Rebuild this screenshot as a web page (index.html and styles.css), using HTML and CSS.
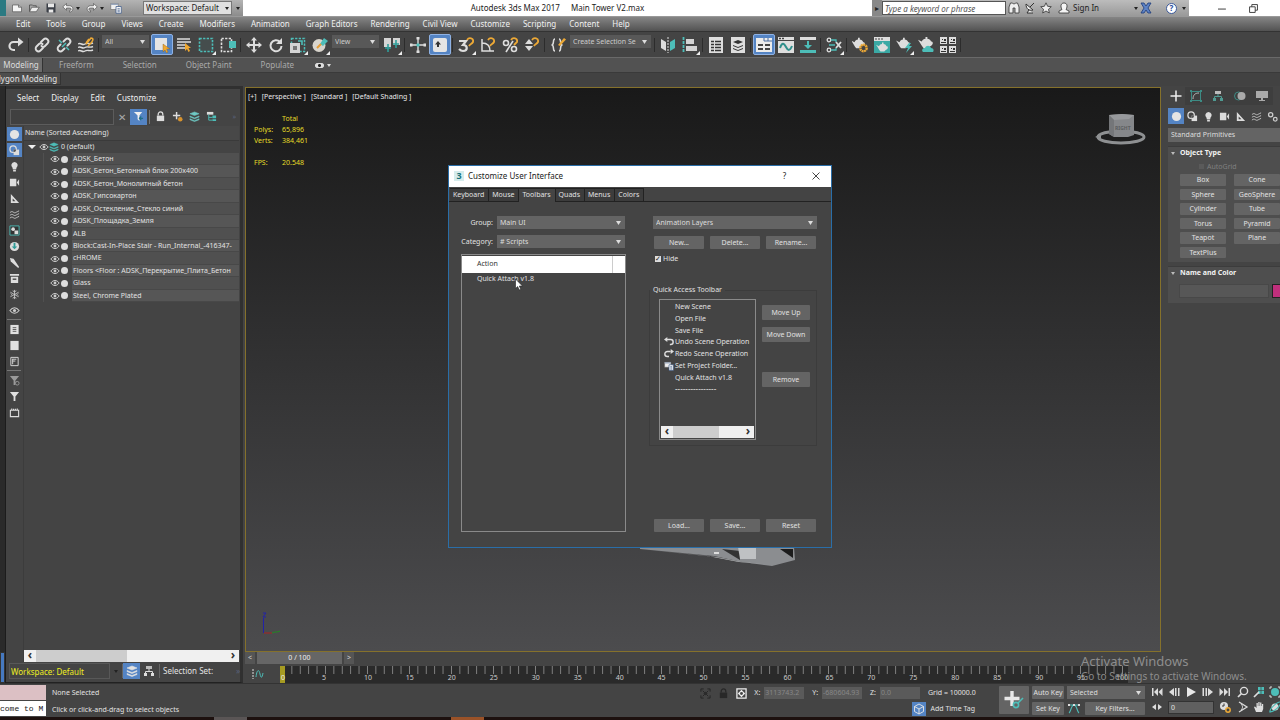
FILE: index.html
```html
<!DOCTYPE html>
<html lang="en">
<head>
<meta charset="utf-8">
<title>Autodesk 3ds Max 2017 - Main Tower V2.max</title>
<link rel="stylesheet" href="styles.css">
</head>
<body>
<svg class="sprite" aria-hidden="true">
  <defs>
    <symbol id="new" viewBox="0 0 16 16"><path d="M2 4h8l4 3v6H2z" fill="#f4f4f4" stroke="#444" stroke-width=".8"/><path d="M10 4v3h4" fill="#bbb" stroke="#444" stroke-width=".8"/></symbol>
    <symbol id="open" viewBox="0 0 16 16"><path d="M2 13V4h4l1 1h4v2" fill="#aaa" stroke="#444"/><path d="M2 13l3-6h10l-4 6z" fill="#eee" stroke="#555"/></symbol>
    <symbol id="save" viewBox="0 0 16 16"><path d="M2 2h12v12H3l-1-1z" fill="#3c4048"/><path d="M4 2h8v5H4zM5 10h6v4H5z" fill="#e8e8e8"/></symbol>
    <symbol id="undo" viewBox="0 0 16 16"><path d="M6 2L1 6.500l5 4.500V8h4c3 0 3 3 0 3.500v2c6-.5 6-8.500 0-8.500H6z" fill="#f4f4f4" stroke="#444" stroke-width=".8"/></symbol>
    <symbol id="redo" viewBox="0 0 16 16"><path d="M10 2l5 4.500-5 4.500V8H6c-3 0-3 3 0 3.500v2C0 13 0 5 6 5h4z" fill="#f4f4f4" stroke="#444" stroke-width=".8"/></symbol>
    <symbol id="project" viewBox="0 0 16 16"><path d="M1 2h10v8H1z" fill="#f0f0f0" stroke="#666" stroke-width=".8"/><path d="M1 2h10v2H1z" fill="#99a7bd"/><path d="M8 6h7v9H8z" fill="#f7f7f7" stroke="#3c5a8a"/><path d="M10 9h3M10 11h3M10 13h3" stroke="#3c5a8a"/></symbol>

    <symbol id="redobig" viewBox="0 0 16 16"><path d="M11 5H5.500a4 4 0 0 0 0 8H7" fill="none" stroke="#ddd" stroke-width="2.200"/><path d="M10 .5l5.500 4.500L10 9.500z" fill="#ddd"/></symbol>
    <symbol id="link" viewBox="0 0 16 16"><g fill="none" stroke="#ddd" stroke-width="1.900" stroke-linecap="round"><path d="M7 5l2.500-2.500a2.500 2.500 0 0 1 4 4L11 9a2.500 2.500 0 0 1-3.500 0"/><path d="M9 11l-2.500 2.500a2.500 2.500 0 0 1-4-4L5 7a2.500 2.500 0 0 1 3.500 0"/></g></symbol>
    <symbol id="unlink" viewBox="0 0 16 16"><g fill="none" stroke="#ddd" stroke-width="1.900" stroke-linecap="round"><path d="M7.500 4.500l2-2a2.500 2.500 0 0 1 4 4l-2 2"/><path d="M8.500 11.500l-2 2a2.500 2.500 0 0 1-4-4l2-2"/></g><path d="M3 3l3 3M10 10l3 3M10 6L6 10" stroke="#4dbdb8" stroke-width="1.500"/></symbol>
    <symbol id="bind" viewBox="0 0 16 16"><g fill="none" stroke="#ddd" stroke-width="1.400"><path d="M0 7c3-2 4 2 7 0s4 1 8-1M0 10.500c3-2 4 2 7 0s4 1 8-1M0 14c3-2 4 2 7 0s4 1 8-1"/></g><path d="M8 7l5-6c3 0 2 3 0 5l-3 3M8 6l3-4" fill="none" stroke="#eda936" stroke-width="1.600"/></symbol>
    <symbol id="select" viewBox="0 0 16 16"><path d="M1 1h12v12H1z" fill="#e4e4e4"/><path d="M9 7v8l2-2 1.500 3 1.500-1-1.500-3H16z" fill="#f0a830" stroke="#7d5a20" stroke-width=".4"/></symbol>
    <symbol id="byname" viewBox="0 0 16 16"><path d="M1 2h13M1 5h14M1 8h9M1 11h8" stroke="#ddd" stroke-width="1.700"/><path d="M9 6v8l2-2 1.500 3 1.500-1-1.500-3H15z" fill="#f0a830"/></symbol>
    <symbol id="rect" viewBox="0 0 16 16"><path d="M1.500 1.500h13v13h-13z" fill="#454d4d" stroke="#4dbdb8" stroke-width="1.600" stroke-dasharray="2.300 1.300"/></symbol>
    <symbol id="window" viewBox="0 0 16 16"><path d="M1.500 1.500h10v13h-10z" fill="none" stroke="#ddd" stroke-width="1.600" stroke-dasharray="2.300 1.300"/><path d="M9 4h7v7H9z" fill="#4dbdb8"/></symbol>
    <symbol id="move" viewBox="0 0 16 16"><path d="M8 0l3 3.500H9V7h3.500V5L16 8l-3.500 3V9H9v3.500h2L8 16l-3-3.500h2V9H3.500v2L0 8l3.500-3v2H7V3.500H5z" fill="#ddd"/></symbol>
    <symbol id="rotate" viewBox="0 0 16 16"><path d="M12 5A5.500 5.500 0 1 0 13.500 9" fill="none" stroke="#ddd" stroke-width="2"/><path d="M14 1v6H8z" fill="#ddd"/></symbol>
    <symbol id="scale" viewBox="0 0 16 16"><path d="M1.500 1.500h13v13h-13z" fill="none" stroke="#4dbdb8" stroke-width="1.500" stroke-dasharray="2.300 1.300"/><path d="M0 6h10v10H0z" fill="#d4d4d4"/><path d="M3 9h4v4H3z" fill="#777"/><path d="M8 4h4v4" fill="none" stroke="#4dbdb8" stroke-width="1.600"/></symbol>
    <symbol id="place" viewBox="0 0 16 16"><circle cx="7" cy="8.500" r="6.500" fill="#d8d4cc"/><path d="M8 7l4-6 4 3-5 5z" fill="#4dbdb8"/><path d="M5 11l4-4" stroke="#e39b35" stroke-width="2"/></symbol>
    <symbol id="pivot" viewBox="0 0 16 16"><path d="M0 1h7v9H0zM9 1h7v7H9z" fill="#d4d4d4"/><path d="M4 7v8M1 11h6M12 3v8M9 7h6" stroke="#2f9f9b" stroke-width="1.600"/></symbol>
    <symbol id="manip" viewBox="0 0 16 16"><path d="M8 1v14M1 8h14" stroke="#ddd" stroke-width="1.400"/><path d="M6.500 0h3v2.500h-3zM6.500 13.500h3V16h-3zM0 6.500h2.500v3H0zM13.500 6.500H16v3h-2.500z" fill="#ddd"/><circle cx="8" cy="8" r="1.700" fill="#4dbdb8"/></symbol>
    <symbol id="kbd" viewBox="0 0 16 16"><rect x="1" y="1" width="14" height="14" rx="2" fill="#e4e4e4"/><path d="M6 4l3 3.500H7V10H5V7.500H3z" fill="#333"/></symbol>
    <symbol id="snap" viewBox="0 0 16 16"><path d="M1 4h7L5 8c5 0 5 6 0 6-2 0-3-1-4-2" fill="none" stroke="#ddd" stroke-width="2.200"/><path d="M9 3c2-3 7-2 6 2-1 2-3 2-4 4" fill="none" stroke="#eda936" stroke-width="1.800"/></symbol>
    <symbol id="angle" viewBox="0 0 16 16"><path d="M2 2v12h12M2 6c6 0 8 4 8 8" fill="none" stroke="#ddd" stroke-width="1.500"/><path d="M8 3c2-3 7-2 6 2-1 2-3 2-4 4" fill="none" stroke="#eda936" stroke-width="1.800"/></symbol>
    <symbol id="percent" viewBox="0 0 16 16"><circle cx="4" cy="6" r="2.500" fill="none" stroke="#ddd" stroke-width="1.600"/><circle cx="12" cy="12" r="2.500" fill="none" stroke="#ddd" stroke-width="1.600"/><path d="M11 4L4 15" stroke="#ddd" stroke-width="1.600"/><path d="M9 3c2-3 7-2 6 2-1 1-2 2-3 3" fill="none" stroke="#eda936" stroke-width="1.800"/></symbol>
    <symbol id="spin" viewBox="0 0 16 16"><path d="M5 2l4 5H1zM1 9h8l-4 5z" fill="#ddd"/><path d="M8 3c2-3 7-2 6 2-1 2-3 2-4 4" fill="none" stroke="#eda936" stroke-width="1.800"/></symbol>
    <symbol id="braces" viewBox="0 0 16 16"><path d="M5 2C2 2 5 8 1.500 8 5 8 2 14 5 14M9 2c3 0 0 6 3.500 6C9 8 12 14 9 14" fill="none" stroke="#ddd" stroke-width="1.500"/><path d="M8 8l6-7 2 1.500L10 9z" fill="#eda936"/></symbol>
    <symbol id="mirror" viewBox="0 0 16 16"><path d="M1 2l5 3v9l-5-3z" fill="#ddd"/><path d="M15 2l-5 3v9l5-3z" fill="#4dbdb8"/><path d="M8 0v16" stroke="#ddd" stroke-dasharray="2 1"/></symbol>
    <symbol id="align" viewBox="0 0 16 16"><path d="M1.500 0v16" stroke="#4dbdb8" stroke-width="1.800" stroke-dasharray="3 1"/><path d="M4 2h8v5H4zM4 9h11v5H4z" fill="#d4d4d4"/></symbol>
    <symbol id="list" viewBox="0 0 16 16"><path d="M1 0h14v16H1z" fill="#dedede"/><path d="M3 4.500h3M7 4.500h6M3 7.500h3M7 7.500h6M3 10.500h3M7 10.500h6M3 13.500h3M7 13.500h6" stroke="#333" stroke-width="1.400"/></symbol>
    <symbol id="layers" viewBox="0 0 16 16"><path d="M1 0h14v16H1z" fill="#dedede"/><path d="M3 5l5-2 5 2-5 2zM3 8l5 2 5-2v1l-5 2-5-2zM3 11l5 2 5-2v1l-5 2-5-2z" fill="#333"/></symbol>
    <symbol id="ribbon" viewBox="0 0 16 16"><path d="M0 1h16v14H0z" fill="#ececec"/><path d="M8 1v3h8M12 1v3" fill="none" stroke="#4b6c9f"/><path d="M2 7h5v2H2zM9 7h5v2H9zM2 11h5v2H2zM9 11h5v2H9z" fill="#444"/></symbol>
    <symbol id="curve" viewBox="0 0 16 16"><path d="M0 0h16v16H0z" fill="#dedede"/><path d="M0 3.500h16" stroke="#444"/><path d="M1 1.500h2M4 1.500h2" stroke="#444" stroke-width="1.500"/><path d="M2 11c2-6 4-5 6-1s4 4 6-1" fill="none" stroke="#2f8f8b" stroke-width="2"/></symbol>
    <symbol id="dope" viewBox="0 0 16 16"><path d="M0 0h16v3H0z" fill="#ddd"/><path d="M0 13h16v3H0z" fill="#4dbdb8"/><path d="M7 4h2v4h3l-4 4-4-4h3z" fill="#4dbdb8"/></symbol>
    <symbol id="schem" viewBox="0 0 16 16"><g fill="none" stroke="#ddd" stroke-width="1.300"><circle cx="3" cy="3" r="1.800"/><circle cx="3" cy="13" r="1.800"/><path d="M10 5l5 6M15 5l-5 6" stroke-width="1.800"/></g><path d="M5 3h5v2M5 13h5v-2M3 8h6" fill="none" stroke="#4dbdb8" stroke-width="1.300"/></symbol>
    <symbol id="pot" viewBox="0 0 16 16"><path d="M0 5l4 2c1-2 2-3 4-3V2h2v2c2 0 3 1 4 3 3 0 2 4-1 5l-2 2H6C4 12 3 9 0 5z" fill="#ddd"/></symbol>
    <symbol id="potgear" viewBox="0 0 16 16"><use href="#pot" x="-1" y="-1" width="14" height="14"/><circle cx="11.500" cy="11" r="3.200" fill="#444" stroke="#eda936" stroke-width="2.400" stroke-dasharray="1.900 .5"/></symbol>
    <symbol id="potwin" viewBox="0 0 16 16"><path d="M0 0h16v16H0z" fill="#3aa9a5"/><path d="M0 0h16v4H0z" fill="#ddd"/><path d="M1 2h2M4 2h2M7 2h2" stroke="#444"/><use href="#pot" x="2" y="4" width="12" height="12"/></symbol>
    <symbol id="potbolt" viewBox="0 0 16 16"><use href="#pot" x="0" y="-1" width="14" height="14"/><path d="M13 6l-4 5h3l-2 5 6-7h-3l2-3z" fill="#4dbdb8"/></symbol>
    <symbol id="potcloud" viewBox="0 0 16 16"><use href="#pot" x="0" y="-2" width="15" height="15"/><path d="M5 15c-2-2 0-4 2-4 1-3 5-3 6 0 3 0 3 3 2 4z" fill="#4dbdb8"/></symbol>
    <symbol id="grid4" viewBox="0 0 16 16"><path d="M0 0h7v7H0zM9 0h7v7H9zM0 9h7v7H0zM9 9h7v7H9z" fill="#ddd"/><path d="M2 2h1v1H2zM4 2h2v2H4zM1 5h5v1H1zM11 2h1v1h-1zM13 2h2v2h-2zM10 5h5v1h-5zM2 11h1v1H2zM4 11h2v2H4zM1 14h5v1H1zM11 11h1v1h-1zM13 11h2v2h-2zM10 14h5v1h-5z" fill="#333"/></symbol>

    <symbol id="circle" viewBox="0 0 12 12"><circle cx="6" cy="6" r="5" fill="#e4e4e4"/></symbol>
    <symbol id="shapes" viewBox="0 0 12 12"><circle cx="4.500" cy="4.500" r="3.500" fill="none" stroke="#ddd" stroke-width="1.400"/><path d="M5 5h6v6H5z" fill="#ddd"/><path d="M5 8a3.500 3.500 0 0 0 3-3H5z" fill="#555"/></symbol>
    <symbol id="bulb" viewBox="0 0 12 12"><path d="M6 1a3.600 3.600 0 0 1 2 6.500V9H4V7.500A3.600 3.600 0 0 1 6 1zM4.500 9.500h3v2h-3z" fill="#ddd"/></symbol>
    <symbol id="cam" viewBox="0 0 12 12"><path d="M1 2h7v8H1zM8.500 6L11 2.500v7z" fill="#ddd"/></symbol>
    <symbol id="helper" viewBox="0 0 12 12"><path d="M2 1l9 10H2zM4 6v3h3z" fill="#ddd" fill-rule="evenodd"/></symbol>
    <symbol id="waves" viewBox="0 0 12 12"><path d="M1 4c3-3 4 1 6 0s2-1 4-2M1 7c3-3 4 1 6 0s2-1 4-2M1 10c3-3 4 1 6 0s2-1 4-2" fill="none" stroke="#ccc"/></symbol>
    <symbol id="gears" viewBox="0 0 12 12"><circle cx="4" cy="4" r="2.300" fill="none" stroke="#ccc" stroke-width="1.400"/><circle cx="9" cy="9" r="2" fill="none" stroke="#ccc" stroke-width="1.400"/></symbol>
    <symbol id="group" viewBox="0 0 12 12"><path d="M1 1h10v10H1z" fill="#333" stroke="#4dbdb8"/><circle cx="4.500" cy="4.500" r="2" fill="#ddd"/><path d="M6 6h4v4H6z" fill="#ddd"/></symbol>
    <symbol id="xref" viewBox="0 0 12 12"><circle cx="6" cy="6" r="5" fill="#ddd"/><path d="M5 2h2v4h2L6 9 3 6h2z" fill="#2f9d99"/></symbol>
    <symbol id="bone" viewBox="0 0 12 12"><path d="M1 1l4 1 6 9-1 1-8-7z" fill="#ddd"/></symbol>
    <symbol id="box" viewBox="0 0 12 12"><path d="M1 1h10v2H1zM2 4h8v7H2z" fill="#ddd"/><path d="M4 6h4v1.500H4z" fill="#444"/></symbol>
    <symbol id="snow" viewBox="0 0 12 12"><path d="M6 1v10M1.500 3.500l9 5M10.500 3.500l-9 5M4 2l2 1 2-1M4 10l2-1 2 1M2 5l1 1-1 1M10 5L9 6l1 1" fill="none" stroke="#ccc" stroke-width=".9"/></symbol>
    <symbol id="eye" viewBox="0 0 12 12"><path d="M1 6c3-4 7-4 10 0-3 4-7 4-10 0z" fill="none" stroke="#ccc" stroke-width="1.200"/><circle cx="6" cy="6" r="1.700" fill="#ccc"/></symbol>
    <symbol id="doc1" viewBox="0 0 12 12"><path d="M1.500 1h9v10h-9z" fill="#e0e0e0"/><path d="M4 4h4M4 6h4M4 8h4" stroke="#555"/></symbol>
    <symbol id="doc2" viewBox="0 0 12 12"><path d="M1.500 1h9v10h-9z" fill="#e0e0e0"/></symbol>
    <symbol id="doc3" viewBox="0 0 12 12"><path d="M2 1.500h8v9H2z" fill="none" stroke="#ddd"/><path d="M4 3.500h4M4 5.500h3M4 3v6" stroke="#ddd"/></symbol>
    <symbol id="funnelx" viewBox="0 0 12 12"><path d="M1 1h10L7 6v5H5V6z" fill="#999"/><circle cx="9" cy="9" r="2" fill="#444" stroke="#999"/></symbol>
    <symbol id="funnel" viewBox="0 0 12 12"><path d="M1 1h10L7 6v5H5V6z" fill="#e0e0e0"/></symbol>
    <symbol id="bag" viewBox="0 0 12 12"><path d="M1.500 3.500h9v7h-9zM3 3V1.500M5 3V2M7 3V2M9 3V1.500" fill="none" stroke="#ddd" stroke-width="1.200"/></symbol>
    <symbol id="funnelb" viewBox="0 0 12 12"><path d="M1 1h9L7 5v6L5 9V5z" fill="#f0f0f0"/><path d="M7 8h4M9 6L7 8l2 2" fill="none" stroke="#1f6f8a" stroke-width="1.300"/></symbol>
    <symbol id="lock" viewBox="0 0 12 12"><path d="M2 5h8v6H2z" fill="currentColor"/><path d="M3.500 5V3.500a2.500 2.500 0 0 1 5 0V5" fill="none" stroke="currentColor" stroke-width="1.400"/></symbol>
    <symbol id="add" viewBox="0 0 12 12"><path d="M5 1v8M1 5h8" stroke="#ddd" stroke-width="1.600"/><circle cx="9" cy="9" r="2.500" fill="#d7932e"/></symbol>
    <symbol id="stack" viewBox="0 0 12 12"><path d="M1 3l5-2 5 2-5 2zM1 5.500l5 2 5-2v1l-5 2-5-2zM1 8.500l5 2 5-2v1l-5 2-5-2z" fill="currentColor" stroke="currentColor" stroke-width=".6"/></symbol>
    <symbol id="tree" viewBox="0 0 12 12"><path d="M1 1h7v3H1z" fill="#ddd"/><path d="M3 4v6h4M3 7h4" fill="none" stroke="#4dbdb8"/><path d="M7 5h4v3H7zM7 9h4v2H7z" fill="#4dbdb8"/></symbol>
    <symbol id="hier" viewBox="0 0 12 12"><path d="M3 1h6v3H3z" fill="#bbb"/><path d="M6 4v3M2.500 9V6.500h7V9" fill="none" stroke="currentColor"/><path d="M1 8h3v3H1zM8 8h3v3H8z" fill="currentColor"/></symbol>
    <symbol id="plus" viewBox="0 0 12 12"><path d="M6 .5v11M.5 6h11" stroke="#eee" stroke-width="1.500"/></symbol>
    <symbol id="modify" viewBox="0 0 12 12"><path d="M1.500 1.500h9v9h-9z" fill="none" stroke="#3d8b84"/><path d="M3 9c0-4 2-6 6-6" fill="none" stroke="#bbb"/><path d="M0 0h2v2H0zM10 0h2v2h-2zM0 10h2v2H0zM10 10h2v2h-2z" fill="#3d8b84"/></symbol>
    <symbol id="motion" viewBox="0 0 12 12"><circle cx="4.500" cy="6" r="4" fill="none" stroke="#3d8b84"/><circle cx="7.500" cy="6" r="4" fill="#aaa"/></symbol>
    <symbol id="display" viewBox="0 0 12 12"><path d="M0 1h12v7H0zM5 8h2v2h2v1H3v-1h2z" fill="#aaa"/></symbol>

    <symbol id="tostart" viewBox="0 0 12 12"><path d="M1 2h1.500v8H1zM7 2v8L3 6zM11.500 2v8l-4-4z" fill="#ddd"/></symbol>
    <symbol id="prev" viewBox="0 0 12 12"><path d="M6 2v8L1 6zM7 2h1.500v8H7zM10 2h1.500v8H10z" fill="#ddd"/></symbol>
    <symbol id="play" viewBox="0 0 12 12"><path d="M2 1l9 5-9 5z" fill="#e8e8e8"/></symbol>
    <symbol id="next" viewBox="0 0 12 12"><path d="M6 2v8l5-4zM.5 2H2v8H.5zM3.500 2H5v8H3.500z" fill="#ddd"/></symbol>
    <symbol id="toend" viewBox="0 0 12 12"><path d="M9.500 2H11v8H9.500zM5 2v8l4-4zM.5 2v8l4-4z" fill="#ddd"/></symbol>
    <symbol id="keymode" viewBox="0 0 12 12"><path d="M5 3v6L1 6zM7 3v6l4-3z" fill="#ddd"/></symbol>
    <symbol id="clock" viewBox="0 0 12 12"><circle cx="5" cy="5" r="4" fill="#ddd"/><path d="M5 2.500V5H3" stroke="#333" fill="none"/><circle cx="9" cy="9" r="2.200" fill="#444" stroke="#eda936" stroke-width="1.500"/></symbol>
    <symbol id="lens" viewBox="0 0 12 12"><circle cx="7" cy="5" r="3.600" fill="none" stroke="#ddd" stroke-width="1.400"/><path d="M4.500 7.500L1 11" stroke="#ddd" stroke-width="1.700"/></symbol>
    <symbol id="lensall" viewBox="0 0 12 12"><path d="M5 1h6v7H5z" fill="#4dbdb8"/><path d="M8 1v7M5 4.500h6" stroke="#444" stroke-width=".7"/><path d="M6 6l-5 5" stroke="#ddd" stroke-width="1.700"/></symbol>
    <symbol id="extents" viewBox="0 0 12 12"><path d="M1 3V1h2M9 1h2v2M11 9v2H9M3 11H1V9" fill="none" stroke="#ddd"/><circle cx="6" cy="6" r="4" fill="#4dbdb8"/></symbol>
    <symbol id="fov" viewBox="0 0 12 12"><path d="M2 1l8 5-8 5" fill="none" stroke="#ddd" stroke-width="1.300"/><path d="M4 3c2 2 2 4 0 6" fill="none" stroke="#ddd"/></symbol>
    <symbol id="hand" viewBox="0 0 12 12"><path d="M3 11L1 6l1-.5L3.500 7V2h1.300v3h.5V1h1.300v4h.5V1.500h1.300V5h.5V3h1.300v5L9 11z" fill="#ddd"/></symbol>
    <symbol id="orbit" viewBox="0 0 12 12"><circle cx="6" cy="6" r="3.500" fill="#ddd"/><path d="M1 11C0 8 8 1 11 1s-3 9-10 10z" fill="none" stroke="#4dbdb8" stroke-width="1.200"/></symbol>
    <symbol id="tangent" viewBox="0 0 12 12"><path d="M1 11c2-1 2-8 5-8s3 7 5 8M2 3h8" fill="none" stroke="#4dbdb8" stroke-width="1.200"/><path d="M0 2h2v2H0zM5 2h2v2H5zM10 2h2v2h-2z" fill="#ddd"/></symbol>
    <symbol id="isolate" viewBox="0 0 12 12"><path d="M1 4V1h3M8 1h3v3M11 8v3H8M4 11H1V8M3 3l6 6M9 3L3 9" fill="none" stroke="#242424"/><circle cx="6" cy="6" r="2" fill="#2b2b2b"/></symbol>
    <symbol id="absolute" viewBox="0 0 12 12"><path d="M1 1h10v10H1z" fill="none" stroke="#eee" stroke-width="1.400"/><path d="M6 2l4 4-4 4-4-4z" fill="#eee"/><circle cx="6" cy="6" r="1.600" fill="#444"/></symbol>
    <symbol id="cube" viewBox="0 0 12 12"><path d="M6 1l4.500 2.500v5L6 11 1.500 8.500v-5zM1.500 3.500L6 6l4.500-2.500M6 6v5" fill="none" stroke="#e8e8e8" stroke-width=".9"/></symbol>
    <symbol id="minicurve" viewBox="0 0 12 12"><path d="M1 1v10" stroke="#ddd" stroke-dasharray="2 1"/><path d="M4 9c1-8 3-8 4-3s2 4 3-1" fill="none" stroke="#4dbdb8"/></symbol>
    <symbol id="bino" viewBox="0 0 12 12"><path d="M1 5l1.500-4h2l1 1h1l1-1h2L11 5v6H7V6H5v5H1z" fill="#eee" stroke="#333" stroke-width=".8"/></symbol>
    <symbol id="dish" viewBox="0 0 12 12"><path d="M2 2c0 5 3 7 7 6zM5 8l-2 3h6M6 5l4-4" fill="#eee" stroke="#333"/></symbol>
    <symbol id="star" viewBox="0 0 12 12"><path d="M6 .8l1.600 3.500 3.700.4-2.800 2.500.8 3.800L6 9l-3.300 2 .8-3.800L.7 4.700l3.700-.4z" fill="#eee" stroke="#333" stroke-width=".8"/></symbol>
    <symbol id="user" viewBox="0 0 12 12"><path d="M1 11V9l3-1.500C2 4 3 1 6 1s4 3 2 6.500L11 9v2z" fill="#f4f4f4" stroke="#333" stroke-width=".8"/></symbol>
    <symbol id="exchange" viewBox="0 0 12 12"><path d="M1 1h3l2 3 2-3h3L8 6l3 5H8L6 8l-2 3H1l3-5z" fill="#5d82c4" stroke="#1c3a7a" stroke-width=".8"/></symbol>
  </defs>
</svg>

<div class="app">
  <header class="titlebar">
    <div class="quick">
      <span class="logo"></span>
      <button class="ico" aria-label="New"><svg><use href="#new"/></svg></button>
      <button class="ico" aria-label="Open"><svg><use href="#open"/></svg></button>
      <button class="ico" aria-label="Save"><svg><use href="#save"/></svg></button>
      <button class="ico" aria-label="Undo"><svg><use href="#undo"/></svg></button><i class="tri dark"></i>
      <button class="ico" aria-label="Redo"><svg><use href="#redo"/></svg></button><i class="tri dark"></i>
      <button class="ico" aria-label="Project folder"><svg><use href="#project"/></svg></button>
      <select class="workspace" aria-label="Workspace"><option>Workspace: Default</option></select>
      <i class="tri dark more"></i>
    </div>
    <h1 class="title"><span>Autodesk 3ds Max 2017</span><span>Main Tower V2.max</span></h1>
    <div class="infocenter">
      <button class="expand" aria-label="Collapse">▸</button>
      <input class="search" type="text" placeholder="Type a keyword or phrase" aria-label="Search">
      <button class="ico" aria-label="Find"><svg><use href="#bino"/></svg></button>
      <button class="ico" aria-label="Communication"><svg><use href="#dish"/></svg></button>
      <button class="ico" aria-label="Favorites"><svg><use href="#star"/></svg></button>
      <button class="signin"><svg><use href="#user"/></svg>Sign In</button>
      <i class="tri dark"></i>
      <button class="ico" aria-label="Exchange"><svg><use href="#exchange"/></svg></button>
      <button class="help" aria-label="Help">?</button>
      <i class="tri dark"></i>
    </div>
    <div class="winbtns">
      <button aria-label="Minimize"><svg viewBox="0 0 8 8"><path d="M0 4.500h7" stroke="#555"/></svg></button>
      <button aria-label="Restore"><svg viewBox="0 0 8 8"><path d="M.5 2.500h5v5h-5zM2.500 2.500v-2h5v5h-2" fill="none" stroke="#333" stroke-width=".8"/></svg></button>
    </div>
  </header>

  <nav class="menubar">
    <button>Edit</button><button>Tools</button><button>Group</button><button>Views</button><button>Create</button><button>Modifiers</button><button>Animation</button><button>Graph Editors</button><button>Rendering</button><button>Civil View</button><button>Customize</button><button>Scripting</button><button>Content</button><button>Help</button>
  </nav>

  <div class="toolbar">
    <button aria-label="Redo"><svg><use href="#redobig"/></svg></button><i class="sep"></i>
    <button aria-label="Link"><svg><use href="#link"/></svg></button>
    <button aria-label="Unlink"><svg><use href="#unlink"/></svg></button>
    <button aria-label="Bind"><svg><use href="#bind"/></svg></button><i class="sep"></i>
    <select class="filter" aria-label="Selection filter"><option>All</option></select>
    <button class="on" aria-label="Select"><svg><use href="#select"/></svg></button>
    <button aria-label="Select by name"><svg><use href="#byname"/></svg></button>
    <button class="fly" aria-label="Region"><svg><use href="#rect"/></svg></button>
    <button aria-label="Window crossing"><svg><use href="#window"/></svg></button><i class="sep"></i>
    <button aria-label="Move"><svg><use href="#move"/></svg></button>
    <button aria-label="Rotate"><svg><use href="#rotate"/></svg></button>
    <button class="fly" aria-label="Scale"><svg><use href="#scale"/></svg></button>
    <button class="fly" aria-label="Place"><svg><use href="#place"/></svg></button>
    <select class="filter" aria-label="Coordinate system"><option>View</option></select>
    <button class="fly" aria-label="Pivot"><svg><use href="#pivot"/></svg></button><i class="sep"></i>
    <button aria-label="Manipulate"><svg><use href="#manip"/></svg></button>
    <button class="on" aria-label="Keyboard override"><svg><use href="#kbd"/></svg></button><i class="sep"></i>
    <button class="fly" aria-label="Snap"><svg><use href="#snap"/></svg></button>
    <button aria-label="Angle snap"><svg><use href="#angle"/></svg></button>
    <button aria-label="Percent snap"><svg><use href="#percent"/></svg></button>
    <button aria-label="Spinner snap"><svg><use href="#spin"/></svg></button><i class="sep"></i>
    <button aria-label="Edit sets"><svg><use href="#braces"/></svg></button>
    <select class="sets" aria-label="Selection sets"><option>Create Selection Se</option></select><i class="sep"></i>
    <button aria-label="Mirror"><svg><use href="#mirror"/></svg></button>
    <button class="fly" aria-label="Align"><svg><use href="#align"/></svg></button><i class="sep"></i>
    <button aria-label="Scene explorer"><svg><use href="#list"/></svg></button>
    <button aria-label="Layer explorer"><svg><use href="#layers"/></svg></button><i class="sep"></i>
    <button class="on" aria-label="Ribbon"><svg><use href="#ribbon"/></svg></button>
    <button aria-label="Curve editor"><svg><use href="#curve"/></svg></button>
    <button aria-label="Dope sheet"><svg><use href="#dope"/></svg></button><i class="sep"></i>
    <button class="fly" aria-label="Schematic"><svg><use href="#schem"/></svg></button><i class="sep"></i>
    <button aria-label="Render setup"><svg><use href="#potgear"/></svg></button>
    <button aria-label="Frame window"><svg><use href="#potwin"/></svg></button>
    <button class="fly" aria-label="Render"><svg><use href="#potbolt"/></svg></button>
    <button aria-label="Cloud render"><svg><use href="#potcloud"/></svg></button>
    <button aria-label="Gallery"><svg><use href="#grid4"/></svg></button><i class="sep"></i>
  </div>

  <div class="ribbon">
    <button class="cur">Modeling</button><button>Freeform</button><button>Selection</button><button>Object Paint</button><button>Populate</button>
    <span class="rec"></span><i class="tri"></i>
  </div>
  <div class="ribbonpanel"><button>lygon Modeling</button></div>

  <main class="work">
    <aside class="dock"><span></span></aside>
    <section class="explorer">
      <nav class="exmenu"><button>Select</button><button>Display</button><button>Edit</button><button>Customize</button></nav>
      <div class="exsearch">
        <input type="text" aria-label="Find object">
        <span class="clear">✕</span>
        <button class="on" aria-label="Filter"><svg><use href="#funnelb"/></svg></button><i class="sep"></i>
        <button aria-label="Lock"><svg><use href="#lock"/></svg></button>
        <button aria-label="Add"><svg><use href="#add"/></svg></button>
        <button aria-label="Layers" class="teal"><svg><use href="#stack"/></svg></button>
        <button aria-label="Tree"><svg><use href="#tree"/></svg></button>
        <span class="chev">»</span>
      </div>
      <div class="exbody">
        <div class="exicons">
          <button class="on" aria-label="Geometry"><svg><use href="#circle"/></svg></button>
          <button class="on" aria-label="Shapes"><svg><use href="#shapes"/></svg></button>
          <button aria-label="Lights"><svg><use href="#bulb"/></svg></button>
          <button aria-label="Cameras"><svg><use href="#cam"/></svg></button>
          <button aria-label="Helpers"><svg><use href="#helper"/></svg></button>
          <button aria-label="Space warps"><svg><use href="#waves"/></svg></button>
          <button aria-label="Groups"><svg><use href="#group"/></svg></button>
          <button aria-label="XRefs"><svg><use href="#xref"/></svg></button>
          <button aria-label="Bones"><svg><use href="#bone"/></svg></button>
          <button aria-label="Containers"><svg><use href="#box"/></svg></button>
          <button aria-label="Frozen"><svg><use href="#snow"/></svg></button>
          <button aria-label="Hidden"><svg><use href="#eye"/></svg></button>
          <hr>
          <button aria-label="All"><svg><use href="#doc1"/></svg></button>
          <button aria-label="None"><svg><use href="#doc2"/></svg></button>
          <button aria-label="Invert"><svg><use href="#doc3"/></svg></button>
          <hr>
          <button aria-label="Clear filter"><svg><use href="#funnelx"/></svg></button>
          <button aria-label="Filter list"><svg><use href="#funnel"/></svg></button>
          <button aria-label="Container"><svg><use href="#bag"/></svg></button>
        </div>
        <div class="exlist">
          <div class="exhead">Name (Sorted Ascending)</div>
          <div class="exroot"><i class="tri"></i><svg><use href="#eye"/></svg><svg class="teal"><use href="#stack"/></svg><span>0 (default)</span></div>
          <ul class="exrows">
            <li><svg><use href="#eye"/></svg><b></b><span>ADSK_Бетон</span></li>
            <li><svg><use href="#eye"/></svg><b></b><span>ADSK_Бетон_Бетонный блок 200x400</span></li>
            <li><svg><use href="#eye"/></svg><b></b><span>ADSK_Бетон_Монолитный бетон</span></li>
            <li><svg><use href="#eye"/></svg><b></b><span>ADSK_Гипсокартон</span></li>
            <li><svg><use href="#eye"/></svg><b></b><span>ADSK_Остекление_Стекло синий</span></li>
            <li><svg><use href="#eye"/></svg><b></b><span>ADSK_Площадка_Земля</span></li>
            <li><svg><use href="#eye"/></svg><b></b><span>ALB</span></li>
            <li><svg><use href="#eye"/></svg><b></b><span>Block:Cast-In-Place Stair - Run_Internal_-416347-</span></li>
            <li><svg><use href="#eye"/></svg><b></b><span>cHROME</span></li>
            <li><svg><use href="#eye"/></svg><b></b><span>Floors &lt;Floor : ADSK_Перекрытие_Плита_Бетон</span></li>
            <li><svg><use href="#eye"/></svg><b></b><span>Glass</span></li>
            <li><svg><use href="#eye"/></svg><b></b><span>Steel, Chrome Plated</span></li>
          </ul>
          <div class="hscroll"><span>‹</span><i></i><span>›</span></div>
        </div>
      </div>
      <div class="exfoot">
        <input class="ws" type="text" value="Workspace: Default" aria-label="Workspace name">
        <i class="tri dark"></i><i class="sep"></i>
        <button class="on" aria-label="By layer"><svg><use href="#stack"/></svg></button>
        <button aria-label="By hierarchy" class="white"><svg><use href="#hier"/></svg></button><i class="sep"></i>
        <span>Selection Set:</span><span class="chev">»</span>
      </div>
    </section>

    <div class="center">
      <div class="upper">
        <section class="viewport">
          <div class="vplabel"><span>[+]</span><span>[Perspective ]</span><span>[Standard ]</span><span>[Default Shading ]</span></div>
          <dl class="stats">
            <dt></dt><dd>Total</dd><dt>Polys:</dt><dd>65,896</dd><dt>Verts:</dt><dd>384,461</dd><dt class="fps">FPS:</dt><dd class="fps">20.548</dd>
          </dl>
          <svg class="viewcube" viewBox="0 0 54 36"><ellipse cx="27" cy="25" rx="23" ry="6" fill="none" stroke="#8e9092" stroke-width="3"/><path d="M1 25l6-3v5z" fill="#8e9092"/><path d="M15 3l13-1 12 1v20l-6 2H20l-5-3z" fill="#85878a"/><path d="M15 3l13-1 12 1-5 4-15 1z" fill="#97999c"/><path d="M15 3l5 5v17l-5-3z" fill="#747679"/><text x="21" y="18" font-size="5" font-weight="bold" fill="#5c5e60">RIGHT</text></svg>
          <svg class="model" viewBox="0 0 156 26"><path d="M0 0h154l1 13-23 6-30-4-28-6L0 2z" fill="#8b8d90"/><path d="M0 2l76 8 26 5 31 3-34-3-31-6z" fill="#c3c5c7"/><path d="M82 2l18 11V4z" fill="#333"/><path d="M98 0h18v12H100z" fill="#bfc1c3"/><path d="M140 2h13v9z" fill="#1c1c1c"/><path d="M74 6h5" stroke="#ddd" stroke-width="2"/></svg>
          <svg class="axis" viewBox="0 0 24 26"><path d="M2.500 6v15" stroke="#2222a8"/><path d="M3 21h8" stroke="#a82222"/><path d="M11 21c3-2 5 0 8-2" fill="none" stroke="#228822"/><path d="M2 1h3L2 5h3" fill="none" stroke="#2222a8"/></svg>
        </section>
        <aside class="command">
          <div class="cmdtabs">
            <button class="cur" aria-label="Create"><svg><use href="#plus"/></svg></button><button aria-label="Modify"><svg><use href="#modify"/></svg></button><button aria-label="Hierarchy"><svg><use href="#hier"/></svg></button><button aria-label="Motion"><svg><use href="#motion"/></svg></button><button aria-label="Display"><svg><use href="#display"/></svg></button>
          </div>
          <div class="cmdcats">
            <button class="on" aria-label="Geometry"><svg><use href="#circle"/></svg></button><button aria-label="Shapes"><svg><use href="#shapes"/></svg></button><button aria-label="Lights"><svg><use href="#bulb"/></svg></button><button aria-label="Cameras"><svg><use href="#cam"/></svg></button><button aria-label="Helpers"><svg><use href="#helper"/></svg></button><button aria-label="Space warps"><svg><use href="#waves"/></svg></button><button aria-label="Systems"><svg><use href="#gears"/></svg></button>
          </div>
          <select class="prims" aria-label="Category"><option>Standard Primitives</option></select>
          <div class="rollout">
            <h2><i class="tri"></i>Object Type</h2>
            <label class="autogrid"><input type="checkbox" disabled>AutoGrid</label>
            <div class="types">
              <button>Box</button><button>Cone</button><button>Sphere</button><button>GeoSphere</button><button>Cylinder</button><button>Tube</button><button>Torus</button><button>Pyramid</button><button>Teapot</button><button>Plane</button><button>TextPlus</button>
            </div>
          </div>
          <div class="rollout">
            <h2><i class="tri"></i>Name and Color</h2>
            <div class="namecolor"><input type="text" aria-label="Object name"><button aria-label="Object color"></button></div>
          </div>
        </aside>
      </div>
      <div class="slider"><button>&lt;</button><button class="thumb">0 / 100</button><button>&gt;</button></div>
      <div class="track">
        <svg class="mini"><use href="#minicurve"/></svg>
        <div class="ruler">
          <span class="frame0">0</span><span>5</span><span>10</span><span>15</span><span>20</span><span>25</span><span>30</span><span>35</span><span>40</span><span>45</span><span>50</span><span>55</span><span>60</span><span>65</span><span>70</span><span>75</span><span>80</span><span>85</span><span>90</span><span>95</span><span class="last">100</span>
        </div>
      </div>
    </div>
  </main>

  <footer class="status">
    <div class="listener"><span></span><span>come to M</span></div>
    <div class="messages"><span>None Selected</span><span>Click or click-and-drag to select objects</span></div>
    <div class="coords">
      <div class="line">
        <svg><use href="#isolate"/></svg><svg class="lk"><use href="#lock"/></svg><svg><use href="#absolute"/></svg>
        <label>X:<input type="text" value="3113743.2"></label><label>Y:<input type="text" value="-680604.93"></label><label>Z:<input type="text" value="0.0"></label>
        <span class="gridsize">Grid = 10000.0</span>
      </div>
      <div class="line tag"><button class="on" aria-label="Time tag"><svg><use href="#cube"/></svg></button><span>Add Time Tag</span></div>
    </div>
    <button class="setkeys" aria-label="Set keys"><svg viewBox="0 0 22 22"><path d="M9 2v15M1.500 9.500h15" stroke="#e8e8e8" stroke-width="3.400"/><circle cx="13" cy="16" r="2.600" fill="none" stroke="#4dbdb8" stroke-width="1.600"/><path d="M15 14l5-5" stroke="#4dbdb8" stroke-width="1.600"/></svg></button>
    <div class="keying">
      <button class="btn">Auto Key</button><select aria-label="Key target"><option>Selected</option></select>
      <button class="btn">Set Key</button><div class="kf"><svg><use href="#tangent"/></svg><button class="btn">Key Filters...</button></div>
    </div>
    <div class="transport">
      <svg><use href="#tostart"/></svg><svg><use href="#prev"/></svg><svg><use href="#play"/></svg><svg><use href="#next"/></svg><svg><use href="#toend"/></svg>
      <svg><use href="#keymode"/></svg><input type="text" value="0" aria-label="Frame"><svg><use href="#clock"/></svg>
    </div>
    <div class="navs">
      <svg><use href="#lens"/></svg><svg><use href="#lensall"/></svg><svg><use href="#extents"/></svg>
      <svg><use href="#fov"/></svg><svg><use href="#hand"/></svg><svg><use href="#orbit"/></svg>
    </div>
  </footer>
  <div class="taskbar"><i></i><i class="orange"></i></div>

  <div class="watermark"><p>Activate Windows</p><small>Go to Settings to activate Windows.</small></div>

  <section class="dialog" role="dialog" aria-label="Customize User Interface">
    <header><span class="mark">3</span><h2>Customize User Interface</h2><button>?</button><button aria-label="Close"><svg viewBox="0 0 8 8"><path d="M.5.5l7 7M7.500.5l-7 7" stroke="#333" stroke-width=".9"/></svg></button></header>
    <nav class="tabs"><button>Keyboard</button><button>Mouse</button><button class="cur">Toolbars</button><button>Quads</button><button>Menus</button><button>Colors</button></nav>
    <div class="dbody">
      <div class="dleft">
        <label class="row">Group:<select><option>Main UI</option></select></label>
        <label class="row">Category:<select><option># Scripts</option></select></label>
        <div class="actions"><div class="ahead">Action</div><div class="aitem">Quick Attach v1.8</div></div>
      </div>
      <div class="dright">
        <select aria-label="Toolbar"><option>Animation Layers</option></select>
        <div class="three"><button class="btn">New...</button><button class="btn">Delete...</button><button class="btn">Rename...</button></div>
        <label class="hide"><input type="checkbox" checked>Hide</label>
        <fieldset>
          <legend>Quick Access Toolbar</legend>
          <div class="qat">
            <ul>
              <li>New Scene</li><li>Open File</li><li>Save File</li>
              <li><svg viewBox="0 0 12 12"><path d="M3 3h5a3 3 0 0 1 0 6H7" fill="none" stroke="#ddd" stroke-width="1.700"/><path d="M4 0v6L0 3z" fill="#ddd"/></svg>Undo Scene Operation</li>
              <li><svg viewBox="0 0 12 12"><path d="M8 3H4a3 3 0 0 0 0 6h2" fill="none" stroke="#ddd" stroke-width="1.700"/><path d="M8 0v6l4-3z" fill="#ddd"/></svg>Redo Scene Operation</li>
              <li><svg><use href="#project"/></svg>Set Project Folder...</li>
              <li>Quick Attach v1.8</li><li class="divider">----------------</li>
            </ul>
            <div class="hscroll"><span>‹</span><i></i><span>›</span></div>
          </div>
          <div class="qbtns"><button class="btn">Move Up</button><button class="btn">Move Down</button><button class="btn rm">Remove</button></div>
        </fieldset>
        <div class="three bottom"><button class="btn">Load...</button><button class="btn">Save...</button><button class="btn">Reset</button></div>
      </div>
    </div>
  </section>
  <svg class="pointer" viewBox="0 0 8 12"><path d="M.5.500v9.500l2.200-2 1.500 3.500 1.600-.7-1.500-3.300h3.200z" fill="#fff" stroke="#222" stroke-width=".6"/></svg>
</div>
</body>
</html>
```
FILE: styles.css
```css
* { box-sizing: border-box; }
body { margin: 0; background: #444; color: #e2e2e2; font: 7px/12px "Noto Sans", sans-serif; }
button, input, select { font: inherit; color: inherit; margin: 0; padding: 0; border: 0; border-radius: 0; background: none; min-width: 0; }
button { display: flex; align-items: center; justify-content: center; white-space: nowrap; }
ul, dl, dd, p, h1, h2 { margin: 0; padding: 0; font-weight: normal; font-size: inherit; list-style: none; }
svg { display: block; flex: none; width: 12px; height: 12px; }
.sprite { position: absolute; width: 0; height: 0; }
select { appearance: none; background: #646464 url("data:image/svg+xml,%3Csvg xmlns='http://www.w3.org/2000/svg' width='5' height='4'%3E%3Cpath d='M0 0h5L2.500 4z' fill='%23ddd'/%3E%3C/svg%3E") no-repeat right 4px center; padding: 0 10px 0 3px; height: 13px; color: #ddd; }
.tri { flex: none; width: 0; height: 0; border: 2px solid transparent; border-top: 3px solid #ddd; border-bottom: 0; }
.tri.dark { border-top-color: #222; }
.sep { flex: none; width: 1px; height: 14px; background: #2c2c2c; }
.on { background: #5484c4; }
.teal { color: #4dbdb8; }
.white { color: #ddd; }
.btn { background: #646464; border-radius: 1px; height: 13px; color: #e0e0e0; }

.app { position: relative; height: 100vh; display: flex; flex-direction: column; overflow: hidden; }

.titlebar { display: flex; height: 16px; background: #fff; color: #222; font-size: 8px; }
.quick { display: flex; align-items: center; width: 243px; background: linear-gradient(#b4b4b4, #8c8c8c); }
.quick .ico { width: 17px; }
.quick .tri { margin-right: 3px; }
.logo { width: 6px; height: 16px; background: #2b7a82; margin-right: 2px; }
.workspace { width: 89px; height: 14px; margin-left: auto; border: 1px solid #777; color: #222; background: #e0e0e0 url("data:image/svg+xml,%3Csvg xmlns='http://www.w3.org/2000/svg' width='4' height='3'%3E%3Cpath d='M0 0h4L2 3z' fill='%23222'/%3E%3C/svg%3E") no-repeat right 2px center; padding: 0 0 0 2px; }
.quick .more { margin: 0 3px 0 4px; }
.title { flex: 1; display: flex; gap: 11px; justify-content: center; align-items: center; }
.infocenter { display: flex; align-items: center; width: 317px; background: linear-gradient(#bcbcbc, #999); }
.expand { width: 10px; height: 16px; background: #888; }
.search { width: 124px; height: 14px; background: #fff; border: 1px solid #555; padding: 0 2px; font-style: italic; font-size: 8px; }
.search::placeholder { color: #555; }
.infocenter .ico { width: 16px; }
.signin { gap: 3px; margin: 0 auto 0 4px; }
.help { width: 11px; height: 11px; margin: 0 5px 0 12px; border-radius: 50%; background: #fff; border: 1px solid #3c5a9a; color: #234a9a; font-weight: bold; }
.infocenter > .tri:last-child { margin-right: 3px; }
.winbtns { display: flex; align-items: center; gap: 22px; width: 91px; padding-left: 29px; }
.winbtns svg { width: 9px; height: 9px; }

.menubar { display: flex; gap: 16px; height: 15px; padding-left: 16px; background: linear-gradient(#858585, #525252); border-top: 1px solid #999; color: #f0f0f0; font-size: 8px; }
.menubar button:nth-child(n+9) { margin-left: -3px; }
.toolbar { display: flex; align-items: center; height: 26px; padding-left: 5px; background: #444; border-top: 1px solid #333; }
.toolbar button { position: relative; flex: none; width: 22px; height: 21px; }
.toolbar svg { width: 16px; height: 16px; }
.toolbar .on { border: 1px solid #8fb2e4; border-radius: 2px; }
.toolbar .fly::after { content: ""; position: absolute; right: 1px; bottom: 0; border: 2px solid transparent; border-right-color: #eee; border-bottom-color: #eee; }
.toolbar .sep { margin: 0 2px 0 1px; background: #2c2c2c; }
.toolbar select { align-self: flex-start; margin: 3px 2px 0 1px; background-color: #585858; color: #ccc; }
.filter { width: 47px; }
.sets { width: 81px; }

.ribbon { display: flex; align-items: center; height: 15px; background: #525252; border-top: 1px solid #696969; color: #aaa; font-size: 8px; gap: 29px; }
.ribbon .cur { width: 43px; height: 14px; margin-right: -13px; background: #6c6c6c; color: #ddd; border-right: 1px solid #333; }
.rec { width: 9px; height: 5px; margin-left: -8px; border: 1px solid #ddd; border-radius: 2px; background: radial-gradient(circle, #222 1px, #ddd 2px); }
.ribbon .tri { margin-left: -26px; }
.ribbonpanel { display: flex; height: 14px; background: #424242; border-top: 1px solid #3a3a3a; font-size: 8px; }
.ribbonpanel button { width: 61px; height: 12px; padding-right: 4px; line-height: 10px; background: #4d4d4d; border: 1px solid #333; border-left: 0; border-top: 0; }

.work { flex: 1; min-height: 0; display: flex; }
.dock { flex: none; width: 6px; background: #2a2a2a; display: flex; align-items: flex-end; border-right: 1px solid #1c1c1c; }
.dock span { width: 5px; height: 31px; background: #4679c0; border: 1px solid #333; }
.explorer { flex: none; width: 237px; display: flex; flex-direction: column; background: #444; border-top: 3px solid #303030; border-right: 3px solid #303030; border-bottom: 1px solid #222; }
.exmenu { display: flex; gap: 12px; height: 18px; padding: 0 11px; font-size: 8px; color: #f0f0f0; }
.exsearch { display: flex; align-items: center; height: 19px; padding: 0 4px; }
.exsearch input { width: 104px; height: 16px; border: 1px solid #5c5c5c; background: #404040; }
.clear { width: 16px; text-align: center; color: #aaa; font-size: 10px; }
.exsearch button { width: 17px; height: 16px; }
.exsearch .sep { margin: 0 2px; background: #777; }
.exsearch button:not(.on) { color: #ddd; }
.exsearch .teal { color: #6fc9c5 !important; }
.exsearch svg { width: 11px; height: 11px; }
.chev { margin-left: auto; color: #59617a; }
.exbody { flex: 1; min-height: 0; display: flex; }
.exicons { width: 18px; padding-left: 1px; display: flex; flex-direction: column; border-right: 1px solid #3c3c3c; }
.exicons button { width: 15px; height: 16px; }
.exicons .on { height: 14px; margin: 1px 0; }
.exicons svg { width: 11px; height: 11px; }
.exicons hr { width: 14px; height: 1px; margin: 1px 0; border: 0; background: #777; }
.exlist { flex: 1; min-width: 0; display: flex; flex-direction: column; padding-right: 1px; }
.exhead { height: 15px; border-bottom: 1px solid #3a3a3a; background: #484848; padding-left: 1px; line-height: 14px; }
.exroot { display: flex; align-items: center; height: 12px; padding-left: 4px; }
.exroot .tri { border-width: 4px 4px 0; margin-right: 3px; border-top-color: #eee; }
.exroot svg { width: 10px; height: 10px; margin-right: 1px; }
.exroot svg:first-of-type { margin-right: 0; }
.exroot span { margin-left: 1px; }
.exrows { display: grid; grid-auto-rows: 1fr; height: 149px; margin-left: 19px; border-left: 1px solid #505050; line-height: 11px; }
.exrows li { display: flex; align-items: center; padding-left: 6px; }
.exrows svg { width: 10px; height: 10px; }
.exrows b { width: 7px; height: 7px; border-radius: 50%; background: #ddd; margin: 0 4px 0 1px; flex: none; }
.exrows span { flex: 1; align-self: stretch; padding-left: 1px; background: #505050; border-bottom: 1px solid #484848; white-space: nowrap; overflow: hidden; }
.exrows li:nth-child(even) span { background: #565656; }
.hscroll { display: flex; height: 12px; margin-top: auto; background: #f0f0f0; color: #333; font-size: 12px; line-height: 9px; font-weight: bold; }
.hscroll span { width: 12px; text-align: center; }
.hscroll i { width: 91px; background: #cdcdcd; margin-right: auto; }
.exfoot { display: flex; align-items: center; height: 20px; padding: 0 0 2px 3px; font-size: 8px; }
.ws { width: 101px; height: 16px; border: 1px solid #585858; color: #eeee22; padding-left: 1px; font-size: 8px; }
.exfoot .tri { margin: 0 4px; }
.exfoot .sep { background: #666; }
.exfoot button { width: 17px; height: 16px; }
.exfoot .on + button { margin-right: 2px; }
.exfoot button + .sep + span { margin-left: 3px; }

.center { flex: 1; min-width: 0; display: flex; flex-direction: column; background: #444; }
.upper { flex: 1; min-height: 0; display: flex; }
.viewport { position: relative; flex: 1; margin: 1px 6px 0 2px; border: 1px solid #85712b; background: linear-gradient(#191919, #4c4c4e); color: #e8e8e8; }
.vplabel { display: flex; gap: 5px; padding: 3px 2px; white-space: nowrap; }
.stats { display: grid; grid-template-columns: 28px auto; justify-content: start; padding: 7px 8px; line-height: 11px; color: #e6dc28; }
.stats .fps { margin-top: 11px; }
.viewcube { position: absolute; right: 12px; top: 24px; width: 54px; height: 36px; }
.model { position: absolute; left: 394px; bottom: 78px; width: 156px; height: 26px; }
.axis { position: absolute; left: 15px; bottom: 13px; width: 24px; height: 26px; }
.command { flex: none; width: 113px; overflow: hidden; background: #444; }
.cmdtabs { display: flex; height: 18px; margin-top: 1px; }
.cmdtabs button { flex: none; width: 22px; color: #4f9a92; background: #3e3e3e; }
.cmdtabs .cur { width: 18px; background: none; }
.cmdcats { display: flex; height: 17px; margin: 3px 0 3px 1px; }
.cmdcats button { flex: none; width: 16px; height: 16px; }
.cmdcats svg { width: 11px; height: 11px; }
.prims { display: block; width: 140px; height: 14px; margin-left: 1px; }
.rollout { width: 140px; margin: 4px 0 0 1px; padding-bottom: 4px; background: #4e4e4e; border-top: 1px solid #3c3c3c; }
.rollout h2 { display: flex; align-items: center; gap: 5px; height: 12px; padding-left: 3px; font-weight: bold; color: #f2f2f2; }
.rollout .tri { border-top-color: #bbb; }
.autogrid { display: flex; align-items: center; gap: 3px; height: 15px; padding-left: 31px; color: #808080; }
.autogrid input { appearance: none; width: 5px; height: 5px; background: #5a5a5a; }
.types { display: grid; grid-template-columns: 46px 46px; gap: 3px 8px; grid-auto-rows: 1fr; height: 84px; padding-left: 12px; line-height: 11px; }
.types button { background: #646464; border-radius: 1px; }
.namecolor { display: flex; gap: 3px; height: 20px; padding: 5px 0 1px 11px; }
.namecolor input { width: 90px; background: #575757; border: 1px solid #484848; }
.namecolor button { width: 16px; background: #c02f7c; border: 1px solid #222; }
.slider { display: flex; gap: 2px; height: 14px; padding: 0 2px 2px; color: #ccc; }
.slider button { width: 10px; background: #555; }
.slider .thumb { width: 85px; background: #666; color: #eee; }
.track { display: flex; height: 17px; padding-right: 152px; }
.mini { margin: 2px 0 0 9px; }
.ruler { flex: 1; display: flex; margin-left: 16px; padding-left: 3px; background: #2a2a2a; color: #ccc; }
.ruler span { flex: 1; min-width: 0; padding-top: 6px; line-height: 11px; text-indent: -3px; background: linear-gradient(90deg, #848484 1px, transparent 1px) 0 0 / 20% 8px repeat-x; }
.ruler .last { flex: none; width: 6px; text-indent: -6px; background: linear-gradient(#848484, #848484) 0 0 / 1px 8px no-repeat; }
.ruler .frame0 { position: relative; z-index: 0; color: #eee; text-indent: -2px; }
.ruler .frame0::before { content: ""; position: absolute; z-index: -1; left: -3px; top: 0; width: 5px; height: 17px; background: #a69b22; }

.status { display: flex; height: 34px; padding-top: 1px; background: #444; border-top: 1px solid #333; font-size: 7px; }
.listener { display: flex; flex-direction: column; gap: 1px; width: 46px; font: 8px/15px "Liberation Mono", monospace; color: #222; }
.listener span { height: 15px; background: #fff; white-space: nowrap; overflow: hidden; }
.listener span:first-child { background: #dcc0c4; }
.messages { display: flex; flex-direction: column; gap: 5px; padding: 2px 0 0 6px; }
.coords { margin-left: auto; }
.line { display: flex; align-items: center; height: 16px; }
.line > svg { margin-right: 7px; width: 11px; height: 11px; }
.lk { color: #282828; }
.line label { display: flex; align-items: center; gap: 4px; margin-right: 8px; }
.line input { width: 40px; height: 12px; padding: 0 1px; background: #5a5a5a; color: #888; }
.gridsize { width: 71px; }
.tag { justify-content: flex-end; gap: 5px; padding-right: 24px; }
.tag .on { width: 14px; height: 14px; }
.setkeys { width: 30px; height: 28px; margin: 1px 3px 0 0; background: #646464; border-radius: 1px; }
.setkeys svg { width: 22px; height: 22px; }
.keying { display: grid; grid-template-columns: 32px 78px; gap: 3px; align-content: start; width: 119px; padding-top: 1px; }
.kf { display: flex; gap: 5px; padding-left: 1px; }
.kf .btn { flex: 1; }
.transport { display: grid; grid-template-columns: repeat(5, 12px); gap: 3px 5px; align-content: start; width: 86px; padding-top: 1px; }
.transport input { grid-column: span 3; height: 13px; padding-left: 2px; background: #606060; border: 1px solid #333; }
.navs { display: grid; grid-template-columns: repeat(3, 12px); gap: 3px 4px; align-content: start; width: 43px; padding-top: 1px; overflow: hidden; }
.taskbar { display: flex; height: 3px; padding-left: 214px; gap: 204px; background: #1d110f; }
.taskbar i { width: 33px; background: #5a5555; }
.taskbar .orange { background: #9a5228; }

.watermark { position: absolute; left: 1081px; bottom: 36px; color: #a0a0a0; opacity: .8; white-space: nowrap; }
.watermark p { font-size: 13px; line-height: 16px; }
.watermark small { display: block; font-size: 10px; line-height: 15px; }

.dialog { position: absolute; left: 448px; top: 165px; width: 384px; height: 383px; display: flex; flex-direction: column; background: #444; border: 1px solid #2a6ea8; }
.dialog > header { display: flex; align-items: center; height: 21px; padding: 0 0 1px 5px; background: #fff; color: #222; font-size: 8px; }
.dialog > header h2 { flex: 1; padding-left: 4px; }
.dialog > header button { width: 31px; }
.dialog > header button svg { width: 8px; height: 8px; }
.mark { width: 10px; height: 10px; line-height: 10px; text-align: center; background: #d6ecec; color: #17727a; font-weight: bold; font-size: 9px; }
.tabs { display: flex; height: 15px; padding: 1px 0 0 1px; border-bottom: 1px solid #222; }
.tabs button { padding: 0 4px 0 3px; background: #3c3c3c; border: solid #222; border-width: 1px 1px 0 0; }
.tabs .cur { height: 14px; background: #444; padding-bottom: 1px; }
.dbody { flex: 1; display: flex; justify-content: space-between; padding: 14px 14px 15px 12px; }
.dleft { display: flex; flex-direction: column; width: 165px; }
.row { display: flex; align-items: center; justify-content: flex-end; gap: 4px; margin: 0 1px 6px -3px; }
.row select { width: 128px; }
.actions { flex: 1; border: 1px solid #8a8a8a; }
.ahead { height: 17px; margin-top: 1px; padding: 2px 15px; background: linear-gradient(#ccc, #ccc) 150px 0 / 1px 17px no-repeat #fff; color: #333; }
.aitem { padding: 0 15px; }
.dright { display: flex; flex-direction: column; width: 168px; }
.dright > select { width: 164px; margin-left: 4px; }
.three { display: grid; grid-template-columns: repeat(3, 1fr); gap: 6px; margin: 7px 1px 0 5px; }
.hide { display: flex; align-items: center; gap: 2px; height: 12px; margin: 4px 0 0 6px; }
.hide input { appearance: none; width: 6px; height: 6px; background: #ddd; }
.hide input:checked::before { content: "✓"; display: block; font: bold 7px/6px "DejaVu Sans", sans-serif; color: #222; }
fieldset { display: flex; gap: 6px; height: 162px; margin: 19px 0 0; padding: 3px 6px 7px 9px; border: 1px solid #3c3c3c; min-width: 0; }
legend { padding: 0 3px; margin-left: -9px; }
.qat { display: flex; flex-direction: column; width: 99px; height: 141px; border: 1px solid #8a8a8a; padding: 1px; }
.qat ul { display: grid; grid-auto-rows: 1fr; height: 94px; line-height: 11px; }
.qat li { position: relative; padding-left: 14px; white-space: nowrap; }
.qat .divider { font-size: 8px; }
.qat li svg { position: absolute; left: 3px; top: 1px; width: 10px; height: 10px; }
.qat .hscroll i { width: 46px; }
.qbtns { display: flex; flex-direction: column; gap: 7px; padding-top: 6px; }
.qbtns .btn { width: 48px; height: 15px; }
.qbtns .rm { margin-top: 23px; }
.bottom { margin-top: auto; }
.pointer { position: absolute; left: 515px; top: 278px; width: 8px; height: 13px; }
```
